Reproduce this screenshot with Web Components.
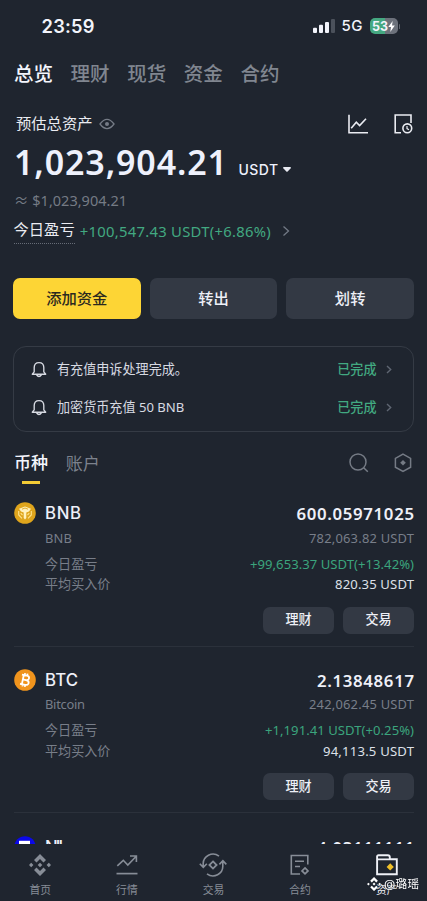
<!DOCTYPE html>
<html lang="zh-CN">
<head>
<meta charset="utf-8">
<meta name="viewport" content="width=device-width,initial-scale=1">
<title>资产总览</title>
<style>
html{background:#1f252f}
body{margin:0;overflow:hidden;font-family:Inter,"Noto Sans CJK SC",sans-serif;color:#eaecf2}
</style>
</head>
<body>
<wallet-app></wallet-app>
<script>
const define=(name,css,html)=>customElements.define(name,class extends HTMLElement{
  constructor(){
    super();
    this.attachShadow({mode:'open'});
    this.shadowRoot.innerHTML='<style>*{box-sizing:border-box}'+css+'</style>'+(typeof html==='function'?html(this):html);
  }
});

/* Text whose tracking is adjusted to fill a given width. */
customElements.define('fit-text',class extends HTMLElement{
  connectedCallback(){
    if(this.shadowRoot)return;
    this.attachShadow({mode:'open'}).innerHTML='<style>:host{display:inline-block;white-space:nowrap;font-family:"Noto Sans","Noto Sans CJK SC",sans-serif}:host([ui]){font-family:Inter,"Noto Sans CJK SC",sans-serif}span{display:inline-block}</style><span></span>';
    const s=this.shadowRoot.querySelector('span'),t=this.getAttribute('text'),w=+this.getAttribute('w');
    s.textContent=t;
    if(w){
      const ls=(w-s.getBoundingClientRect().width)/(t.length-1);
      s.style.letterSpacing=ls.toFixed(3)+'px';
      s.style.marginRight=(-ls).toFixed(3)+'px';
    }
  }
});

const icons={
  eye:[16,12,'<path d="M1 6Q8-3.2 15 6Q8 15.2 1 6Z" stroke-width="1.3"/><circle cx="8" cy="6" r="2" fill="currentColor" stroke="none"/>'],
  chart:[20,20,'<path d="M1 .7V18.8H20M3.2 14.2L8.3 8.2L11.6 11.5L18 4.7" stroke-width="1.6"/>'],
  history:[19,20,'<path d="M7 18.8H1.2V1H17V9" stroke-width="1.6"/><circle cx="13.3" cy="14.3" r="4.4" stroke-width="1.6"/><path d="M13 12V14.6L15 15.8" stroke-width="1.2"/>'],
  chevron:[8,12,'<path d="M1.5 1.5L6.5 6L1.5 10.5" stroke-width="1.3"/>'],
  small:[6,9,'<path d="M1 1L4.7 4.5L1 8" stroke-width="1.4"/>'],
  bell:[16,17,'<path d="M3.2 10.8V6.6C3.2 3.6 5.2 1.6 8 1.6S12.8 3.6 12.8 6.6V10.8L14.7 13.2H1.3Z" stroke-width="1.35" stroke-linejoin="round"/><path d="M5.5 13.5Q8 17.5 10.5 13.5" stroke-width="1.5"/>'],
  search:[20,20,'<circle cx="9" cy="9" r="8" stroke-width="1.5"/><path d="M14.7 14.7L18.8 18.8" stroke-width="1.5"/>'],
  hex:[18,20,'<path d="M9 1.2L16.6 5.4V14.2L9 18.5L1.4 14.2V5.4Z" stroke-width="1.5"/><path d="M9 7L11.8 9.8L9 12.6L6.2 9.8Z" fill="currentColor" stroke="none"/>'],
  home:[22,22,'<g fill="currentColor" stroke="none"><path d="M11 0L17 6L14.5 8.5L11 5L7.5 8.5L5 6Z"/><path d="M11 22L17 16L14.5 13.5L11 17L7.5 13.5L5 16Z"/><path d="M11 8.7L13.3 11L11 13.3L8.7 11ZM2.2 8.8L4.4 11L2.2 13.2L0 11ZM19.8 8.8L22 11L19.8 13.2L17.6 11Z"/></g>'],
  market:[22,22,'<path d="M1.3 11.8L7.3 6.3L11.8 11L20 2.5M14 2H20.4V8" stroke-width="1.6"/><path d="M.5 19.6H21.5" stroke-width="1.7"/>'],
  trade:[28,24,'<path d="M20 3.2A9.8 9.8 0 0 0 4.2 11.5V14M.8 10.8L4.3 14.4L7.8 10.8M8 20.8A9.8 9.8 0 0 0 23.8 12.5V8M20.4 11.4L23.9 7.6L27.3 11.4" stroke-width="1.6"/><path d="M14 8.4L17.6 12L14 15.6L10.4 12Z" stroke-width="1.8"/>'],
  contract:[20,22,'<path d="M10 20H1.3V1.5H17.8V10.5" stroke-width="1.6"/><path d="M5 7.3H14M5 12.5H10" stroke-width="1.5"/><path d="M15 13.9L18 16.9L15 19.9L12 16.9Z" stroke-width="1.7"/>'],
  assets:[22,22,'<path d="M1.1 2.6Q1.1 1.2 2.5 1.2H11.8Q13.8 1.2 13.8 3.2V5.2H20.8V20.2H1.1ZM1.1 5.4H14" stroke-width="1.9"/><path d="M14.2 9.3L17.8 12.9L14.2 16.5L10.6 12.9Z" fill="#f0c029" stroke="none"/>'],
  bnb:[22,22,'<circle cx="11" cy="11" r="10.8" fill="#dfa51c" stroke="none"/><path d="M5 6.7L11 4.4L17 6.7L15 9.6L12.3 10.5V16L11 17.4L9.7 16V10.5L7 9.6Z" fill="#fff1bc" stroke="none"/><path d="M4.7 9V13L8 16.3M17.3 9V13L14 16.3M6.7 11.2L8.5 13M15.3 11.2L13.5 13" stroke="#ffe38c" stroke-width="1.1"/><path d="M8 7.2L11 6L14 7.2" stroke="#dfa51c" stroke-width=".9"/>'],
  btc:[22,22,'<circle cx="11" cy="11" r="10.8" fill="#f0941d" stroke="none"/><g transform="rotate(12 11 11)" stroke="#fff" stroke-width="1.8"><path d="M6.9 6.4H12Q14.6 6.4 14.6 8.6T12 10.9H8.8M12 10.9Q15.2 10.9 15.2 13.3T12 15.7H6.9M8.8 6.4V15.7M9.7 4.2V6.4M12.2 4.2V6.4M9.7 15.7V17.8M12.2 15.7V17.8"/></g>'],
  nil:[22,22,'<circle cx="11" cy="11" r="10.8" fill="#0b08e8" stroke="none"/><path d="M5 4.8H16V15H5Z" fill="#fff" stroke="none"/>']
};
customElements.define('line-icon',class extends HTMLElement{
  connectedCallback(){
    if(this.shadowRoot)return;
    const [w,h,p]=icons[this.getAttribute('name')],k=+this.getAttribute('scale')||1;
    this.attachShadow({mode:'open'}).innerHTML=`<style>:host{display:block;flex:none}svg{display:block}</style><svg width="${w*k}" height="${h*k}" viewBox="0 0 ${w} ${h}" fill="none" stroke="currentColor">${p}</svg>`;
  }
});

define('status-bar',`:host{display:flex;height:52px;padding:0 27px 0 41.5px;align-items:center;color:#f2f4fb}
.time{font-size:18.3px;font-weight:600;line-height:52px;flex:1}.sig{display:block}.net{font-size:15px;font-weight:500;margin:0 7px 0 7px;line-height:52px}
.bat{display:flex;align-items:center}.cell{width:28px;height:16px;border-radius:5px;background:linear-gradient(90deg,#45a881 54%,#6c717b 54%);display:flex;align-items:center;justify-content:center;font-size:12.5px;font-weight:700;line-height:16px}.cell fit-text{height:15px}.tip{width:1.5px;height:5px;border-radius:1px;background:#5f646e;margin-left:1px}`,
`<div class="time"><fit-text ui text="23:59" w="53"></fit-text></div>
<svg class="sig" width="22" height="14" viewBox="0 0 22 14"><g fill="#f2f4fb"><rect x="0" y="8.7" width="4" height="5.3" rx="1"/><rect x="6" y="5.7" width="4" height="8.3" rx="1"/><rect x="12" y="3" width="4" height="11" rx="1"/></g><rect x="18" y="0" width="4" height="14" rx="1" fill="#4b515b"/></svg>
<span class="net"><fit-text ui text="5G" w="21"></fit-text></span>
<div class="bat"><div class="cell"><fit-text ui text="53" w="16"></fit-text><svg width="7" height="11" viewBox="0 0 7 11"><path d="M4.7 0L.3 6H3L2.3 11L6.8 4.6H4Z" fill="#fff"/></svg></div><div class="tip"></div></div>`);

define('top-tabs',`:host{display:flex;height:44px;padding-left:14px;gap:17.6px;align-items:center;font-size:19.5px;line-height:44px;font-weight:500;color:#808690}b{font-weight:500;color:#f4f6fd}`,
`<b>总览</b><span>理财</span><span>现货</span><span>资金</span><span>合约</span>`);

define('balance-panel',`:host{display:block;padding:0 14px}
.row{display:flex;align-items:center}.head{height:31px;padding:0 0 0 2px;font-size:15.3px;line-height:31px}
.eye{margin-left:6.5px;color:#757b86;flex:1}.hist{margin-left:26px}
.sum{height:46px;align-items:baseline;line-height:47px;padding-left:0;font-size:34px;font-weight:600;color:#eef1fc}
.cur{font-size:14px;font-weight:500;margin-left:11.5px}.tri{margin-left:5px;width:8px;height:5px;align-self:center;position:relative;top:7px}
.usd{height:31px;line-height:31px;color:#757b85;font-size:14.5px}
.today{height:30px;font-size:15.3px;line-height:24px}.lab{height:26px;border-bottom:1px dotted #666c77;margin-left:-.5px}.gain{color:#42a981;font-size:14.8px;margin-left:5px;position:relative;top:-.5px}.go{margin-left:11px;color:#727985}`,
`<div class="row head"><span>预估总资产</span><line-icon class="eye" name="eye"></line-icon><line-icon name="chart"></line-icon><line-icon class="hist" name="history"></line-icon></div>
<div class="row sum"><fit-text text="1,023,904.21" w="213"></fit-text><fit-text ui class="cur" text="USDT" w="39.5"></fit-text><svg class="tri" viewBox="0 0 8 5"><path d="M.5 0H7.5L8 1L4.4 4.8H3.6L0 1Z" fill="#e9ebf3"/></svg></div>
<div class="usd"><fit-text text="≈ $1,023,904.21" w="113"></fit-text></div>
<div class="row today"><span class="lab">今日盈亏</span><fit-text class="gain" text="+100,547.43 USDT(+6.86%)" w="191"></fit-text><line-icon class="go" name="chevron"></line-icon></div>`);

define('action-button',`:host{display:flex;align-items:center;justify-content:center;background:#333944;color:#eef0f7;font-weight:500;border-radius:7px;height:41px;font-size:15.3px;line-height:1}
:host([primary]){background:#fdd535;color:#2b291f}:host([small]){width:71px;height:27px;border-radius:7px;font-size:13.1px}`,'<slot></slot>');

define('notice-row',`:host{display:flex;align-items:center;height:37.5px;padding:0 21.5px 0 17px;font-size:13.1px;line-height:37.5px;color:#d7dae2}
.m{margin-left:10px;flex:1;white-space:nowrap;font-family:"Noto Sans","Noto Sans CJK SC",sans-serif}.ok{color:#42a981;font-weight:500;margin-right:9px}.c{color:#5f6672}`,
`<line-icon name="bell"></line-icon><span class="m"><slot></slot></span><span class="ok">已完成</span><line-icon class="c" name="small"></line-icon>`);

define('asset-tabs',`:host{display:flex;height:40px;padding:0 15.3px 0 14px;align-items:center;font-size:17.1px;line-height:41px}
.on{display:flex;flex-direction:column;align-items:center;font-weight:500;height:42px;margin-right:17.5px;line-height:41px;color:#f4f6fd}.on i{display:block;width:17.5px;height:3.5px;background:#f3cb35;margin-top:-2.5px;flex:none}
.off{flex:1;color:#7c828d}.ic{color:#757b85}.h{margin-left:25px}`,
`<div class="on">币种<i></i></div><span class="off">账户</span><line-icon class="ic" name="search"></line-icon><line-icon class="ic h" name="hex"></line-icon>`);

customElements.define('coin-item',class extends HTMLElement{
  connectedCallback(){
    const a=n=>this.getAttribute(n)||'',[w1,w2,w3,w4,w5,w6]=a('widths').split(' ');
    const details=a('name')&&`<div class="r b"><fit-text text="${a('name')}" w="${w3}"></fit-text><fit-text text="${a('value')}" w="${w4}"></fit-text></div>
<div class="r c"><span>今日盈亏</span><fit-text class="g" text="${a('pnl')}" w="${w5}"></fit-text></div>
<div class="r d"><span>平均买入价</span><fit-text class="w" text="${a('cost')}" w="${w6}"></fit-text></div>
<div class="act"><action-button small>理财</action-button><action-button small>交易</action-button></div>`;
    this.attachShadow({mode:'open'}).innerHTML=`<style>*{box-sizing:border-box}:host{display:block;flex:none;box-sizing:border-box;margin:0 13px 18.5px 14px;height:148px;border-bottom:1px solid #2b313b;color:#787e89;font-size:13.1px}
.r{display:flex;align-items:center;justify-content:space-between}.a{height:29px;line-height:30px;color:#eef0f8;font-size:16.8px}.a line-icon{margin-right:9px}.n{flex:1;font-weight:500}.a>fit-text{position:relative;top:1px;font-weight:600}.b{height:20px;line-height:20px;font-size:12.9px}.b,.c,.d{padding-left:31px}.c{margin-top:7px;height:19.5px;line-height:19.5px}.d{height:20px;line-height:20px}.g{color:#3ba47d}.w{color:#dde0e8}
.act{display:flex;justify-content:flex-end;gap:9px;margin-top:12.5px}</style>
<div class="r a"><line-icon name="${a('icon')}"></line-icon><span class="n"><fit-text ui text="${a('sym')}" w="${w1}"></fit-text></span><fit-text text="${a('amount')}" w="${w2}"></fit-text></div>
${details}`;
  }
});

define('nav-item',`:host{display:flex;flex-direction:column;align-items:center;flex:1;color:#878d97;font-size:10.8px}
:host([active]){color:#eff1f7}.i{height:24px;display:flex;align-items:center}.t{line-height:16px;margin-top:6.5px}`,
el=>`<div class="i"><line-icon name="${el.getAttribute('icon')}"></line-icon></div><span class="t"><slot></slot></span>`);

define('bottom-nav',`:host{display:flex;height:57px;padding:8.5px 0 0;margin:0 -3px}`,
`<nav-item icon="home">首页</nav-item><nav-item icon="market">行情</nav-item><nav-item icon="trade">交易</nav-item><nav-item icon="contract">合约</nav-item><nav-item active icon="assets">资产</nav-item>`);

define('author-mark',`:host{position:absolute;left:367px;top:876px;display:flex;align-items:center;gap:3px;height:16px;font-size:11.6px;line-height:16px;color:#fff;white-space:nowrap;filter:drop-shadow(0 0 1px #1f252f)}`,
`<line-icon name="home" scale=".64"></line-icon><fit-text ui text="@璐瑶" w="35"></fit-text>`);

define('wallet-app',`:host{display:block;position:relative;width:427px;height:901px;overflow:hidden;background:#1f252f}
.actions{display:grid;grid-template-columns:repeat(3,1fr);gap:9px;padding:0 13px;margin-top:32px}
.notices{margin:26.5px 13px 0;height:86px;border:1px solid #353b45;border-radius:13px;padding-top:4.5px}
.screen{display:flex;flex-direction:column;height:844px;overflow:hidden}.screen>*{flex:none}asset-tabs{margin-top:11.5px}.list{margin-top:15.5px}.next{margin-top:19.5px}`,
`<div class="screen"><status-bar></status-bar><top-tabs style="margin-bottom:12px"></top-tabs><balance-panel></balance-panel>
<div class="actions"><action-button primary>添加资金</action-button><action-button>转出</action-button><action-button>划转</action-button></div>
<div class="notices"><notice-row>有充值申诉处理完成。</notice-row><notice-row>加密货币充值 50 BNB</notice-row></div>
<asset-tabs></asset-tabs>
<div class="list">
<coin-item icon="bnb" sym="BNB" amount="600.05971025" name="BNB" value="782,063.82 USDT" pnl="+99,653.37 USDT(+13.42%)" cost="820.35 USDT" widths="36 117.5 27 105 164 79"></coin-item>
<coin-item icon="btc" sym="BTC" amount="2.13848617" name="Bitcoin" value="242,062.45 USDT" pnl="+1,191.41 USDT(+0.25%)" cost="94,113.5 USDT" widths="33 97 40 105 149 91"></coin-item>
<coin-item class="next" icon="nil" sym="NIL" amount="4.03111111" widths="23 97"></coin-item>
</div></div><bottom-nav></bottom-nav><author-mark></author-mark>`);
</script>
</body>
</html>
